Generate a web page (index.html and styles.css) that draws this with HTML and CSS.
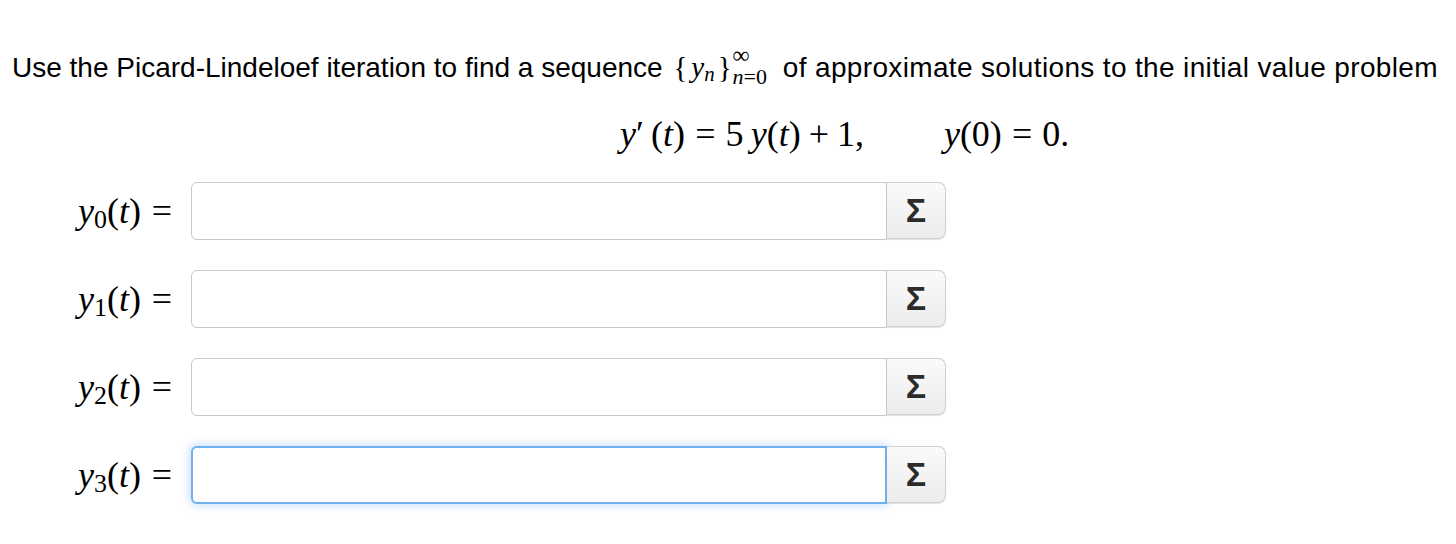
FILE: index.html
```html
<!DOCTYPE html>
<html>
<head>
<meta charset="utf-8">
<link rel="stylesheet" href="styles.css">
</head>
<body>
<div class="page">
  <p class="intro">Use the Picard-Lindeloef iteration to find a sequence <span class="m seq"><span class="br">{</span><i class="yn">y<sub>n</sub></i><span class="br">}</span><span class="lims"><span class="sup">∞</span><span class="sub"><i>n</i>=0</span></span></span> <span class="rest">of approximate solutions to the initial value problem</span></p>
  <div class="eq m">
    <span class="eq1"><i>y</i>′&thinsp;(<i>t</i>)<span class="op">=</span>5&thinsp;<i>y</i>(<i>t</i>)<span class="bin">+</span>1,</span>
    <span class="eq2"><i>y</i>(0)<span class="op">=</span>0.</span>
  </div>
  <div class="rows">
    <div class="row">
      <div class="label m"><i>y</i><sub>0</sub>(<i>t</i>)<span class="op">=</span></div>
      <div class="field"><div class="input"></div><button class="sigma">Σ</button></div>
    </div>
    <div class="row">
      <div class="label m"><i>y</i><sub>1</sub>(<i>t</i>)<span class="op">=</span></div>
      <div class="field"><div class="input"></div><button class="sigma">Σ</button></div>
    </div>
    <div class="row">
      <div class="label m"><i>y</i><sub>2</sub>(<i>t</i>)<span class="op">=</span></div>
      <div class="field"><div class="input"></div><button class="sigma">Σ</button></div>
    </div>
    <div class="row">
      <div class="label m"><i>y</i><sub>3</sub>(<i>t</i>)<span class="op">=</span></div>
      <div class="field"><div class="input focus"></div><button class="sigma">Σ</button></div>
    </div>
  </div>
</div>
</body>
</html>
```

FILE: styles.css
```css
html, body {
  margin: 0;
  padding: 0;
  background: #ffffff;
}
.page {
  width: 1456px;
  height: 544px;
  overflow: hidden;
  color: #000;
}
.intro {
  margin: 0;
  padding: 45px 0 0 12px;
  font-family: "Liberation Sans", Arial, sans-serif;
  font-size: 28px;
  line-height: 34px;
  height: 34px;
  white-space: nowrap;
}
.rest { letter-spacing: 0.35px; }
.m {
  font-family: "Liberation Serif", "Times New Roman", serif;
}
.m i { font-style: italic; }
.m sub {
  font-size: 0.72em;
  vertical-align: -0.2em;
  line-height: 0;
  font-style: normal;
}
.op { margin: 0 0.28em; }
.bin { margin: 0 0.22em; }
.seq {
  font-size: 29px;
  line-height: 34px;
  margin-left: 3px;
}
.yn { margin: 0 3px 0 4px; }
.seq i sub { font-style: italic; }
.br { font-style: normal; }
.lims {
  display: inline-flex;
  flex-direction: column;
  vertical-align: 14px;
  font-size: 22px;
  line-height: 21px;
  margin-left: 1px;
  margin-right: 8px;
}
.lims .sup { font-size: 24px; }
.eq {
  display: flex;
  padding: 35px 0 0 620px;
  font-size: 36px;
  line-height: 40px;
  white-space: nowrap;
}
.eq2 { margin-left: 80px; }
.rows {
  display: flex;
  flex-direction: column;
  gap: 30px;
  padding-top: 28px;
}
.row {
  display: flex;
  align-items: center;
  height: 58px;
}
.label {
  width: 191px;
  text-align: right;
  padding-right: 19px;
  box-sizing: border-box;
  flex: none;
  font-size: 36px;
  white-space: nowrap;
}
.label sub { font-size: 0.72em; }
.label .op { margin-right: 0; margin-left: 0.3em; }
.field {
  display: flex;
  height: 58px;
}
.input {
  width: 696px;
  height: 58px;
  box-sizing: border-box;
  border: 1px solid #c8c8c8;
  border-radius: 6px 0 0 6px;
  background: #fff;
}
.input.focus {
  border: 2px solid #6fb0ee;
  box-shadow: 0 0 8px 2px rgba(110, 170, 240, 0.35);
}
.sigma {
  width: 59px;
  height: 57px;
  box-sizing: border-box;
  border: 1px solid #cfcfcf;
  border-left: none;
  border-radius: 0 8px 8px 0;
  background: linear-gradient(#fafafa, #ececec);
  box-shadow: 0 1px 1px rgba(0, 0, 0, 0.12);
  font-family: "Liberation Sans", Arial, sans-serif;
  font-weight: bold;
  font-size: 34px;
  color: #2b2b2b;
  padding: 0 0 2px 0;
  line-height: 1;
  display: flex;
  align-items: center;
  justify-content: center;
}
```
